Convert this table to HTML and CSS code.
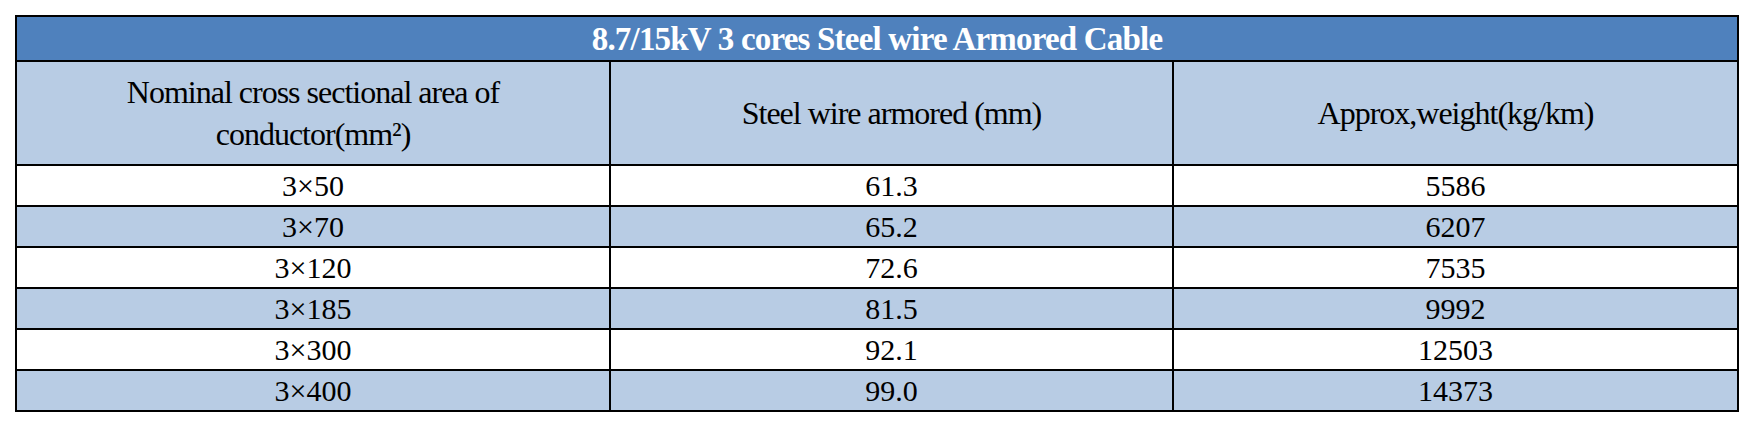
FILE: index.html
```html
<!DOCTYPE html>
<html lang="en">
<head>
<meta charset="utf-8">
<title>8.7/15kV 3 cores Steel wire Armored Cable</title>
<link rel="stylesheet" href="styles.css">
</head>
<body>
<div class="page">
<table class="spec">
  <colgroup>
    <col class="c1">
    <col class="c2">
    <col class="c3">
  </colgroup>
  <thead>
    <tr class="title-row"><th colspan="3">8.7/15kV 3 cores Steel wire Armored Cable</th></tr>
    <tr class="head-row">
      <th>Nominal cross sectional area of<br>conductor(mm²)</th>
      <th>Steel wire armored (mm)</th>
      <th>Approx,weight(kg/km)</th>
    </tr>
  </thead>
  <tbody>
    <tr class="odd"><td>3×50</td><td>61.3</td><td>5586</td></tr>
    <tr class="even"><td>3×70</td><td>65.2</td><td>6207</td></tr>
    <tr class="odd"><td>3×120</td><td>72.6</td><td>7535</td></tr>
    <tr class="even"><td>3×185</td><td>81.5</td><td>9992</td></tr>
    <tr class="odd"><td>3×300</td><td>92.1</td><td>12503</td></tr>
    <tr class="even"><td>3×400</td><td>99.0</td><td>14373</td></tr>
  </tbody>
</table>
</div>
</body>
</html>
```
FILE: styles.css
```css
html, body {
  margin: 0;
  padding: 0;
  background: #ffffff;
}

.page {
  padding: 15px 0 0 15px;
}

.spec {
  border-collapse: collapse;
  table-layout: fixed;
  width: 1722px;
  font-family: "Liberation Serif", "Times New Roman", serif;
  color: #000000;
  border: 2px solid #000000;
}

.c1 { width: 594px; }
.c2 { width: 563px; }
.c3 { width: 565px; }

.spec th,
.spec td {
  border: 2px solid #000000;
  text-align: center;
  vertical-align: middle;
  padding: 0;
}

.title-row th {
  height: 43px;
  background: #4f81bd;
  color: #ffffff;
  font-weight: bold;
  font-size: 33px;
  letter-spacing: -0.8px;
  line-height: 40px;
}

.head-row th {
  height: 102px;
  background: #b8cce4;
  font-weight: normal;
  font-size: 32px;
  letter-spacing: -1px;
  line-height: 42px;
}

.spec td {
  height: 39px;
  font-size: 30px;
  line-height: 36px;
}

.odd td { background: #ffffff; }
.even td { background: #b8cce4; }
```
